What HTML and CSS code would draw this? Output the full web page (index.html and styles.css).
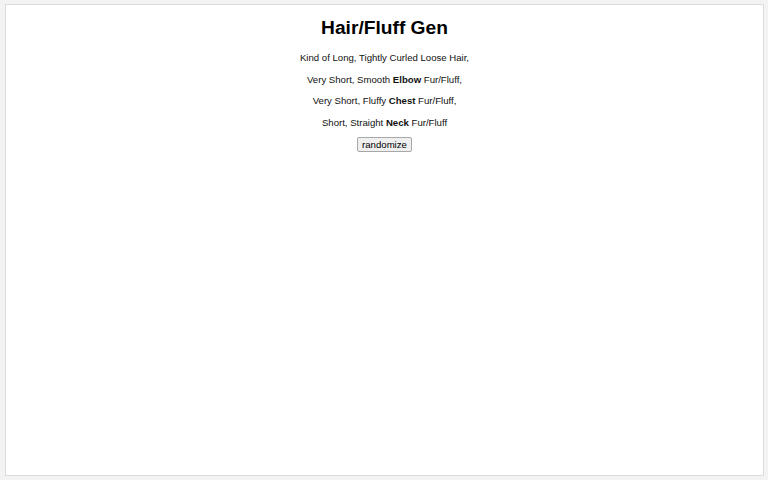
FILE: index.html
```html
<!DOCTYPE html>
<html>
<head>
<meta charset="utf-8">
<link rel="stylesheet" href="styles.css">
</head>
<body>
<div class="panel">
  <h1 class="title">Hair/Fluff Gen</h1>
  <p class="line">Kind of Long, Tightly Curled Loose Hair,</p>
  <p class="line">Very Short, Smooth <b>Elbow</b> Fur/Fluff,</p>
  <p class="line">Very Short, Fluffy <b>Chest</b> Fur/Fluff,</p>
  <p class="line">Short, Straight <b>Neck</b> Fur/Fluff</p>
  <button class="btn">randomize</button>
</div>
</body>
</html>
```
FILE: styles.css
```css
html, body { margin: 0; padding: 0; }
body {
  background: #f3f3f3;
  font-family: "Liberation Sans", Arial, sans-serif;
  padding: 4px 4px 4px 5px;
  height: 480px;
  box-sizing: border-box;
}
.panel {
  background: #fff;
  border: 1px solid #dcdcdc;
  height: 472px;
  box-sizing: border-box;
  text-align: center;
  padding-top: 12px;
}
.title {
  font-size: 19.2px;
  font-weight: bold;
  margin: 0 0 8px;
  line-height: 22px;
}
.line {
  font-size: 9.6px;
  margin: 0;
  line-height: 12px;
  padding: 4.85px 0;
  color: #111;
}
.btn {
  font-family: "Liberation Sans", Arial, sans-serif;
  font-size: 9.6px;
  margin-top: 3px;
  padding: 1px 4px;
  line-height: 11px;
  background: #efefef;
  border: 1px solid #a8a8a8;
  border-radius: 2px;
  color: #000;
}
```
